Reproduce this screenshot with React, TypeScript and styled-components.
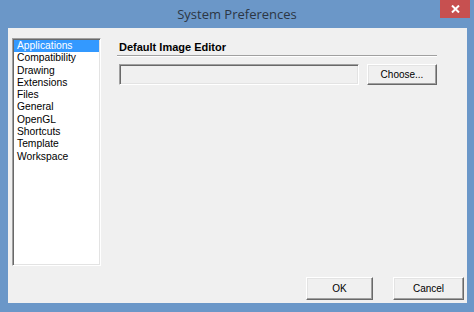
import styled, { createGlobalStyle } from "styled-components";

const GlobalStyle = createGlobalStyle`
  html, body {
    margin: 0;
    padding: 0;
    background: #6b97c8;
  }
  * {
    box-sizing: border-box;
  }
`;

const Window = styled.div`
  width: 474px;
  height: 312px;
  background: #6b97c8;
  display: flex;
  flex-direction: column;
  padding: 0 7px 9px 8px;
  font-family: "Liberation Sans", Arial, sans-serif;
`;

const TitleBar = styled.div`
  height: 28px;
  display: grid;
  grid-template-columns: 1fr auto 1fr;
  align-items: start;
  margin: 0 -7px 0 -8px;
`;

const Title = styled.div`
  grid-column: 2;
  font-family: "Open Sans", "Noto Sans", sans-serif;
  font-size: 13px;
  line-height: 28px;
  color: #2c3644;
`;

const CloseButton = styled.button`
  grid-column: 3;
  justify-self: end;
  margin-right: 4px;
  width: 30px;
  height: 18px;
  border: none;
  padding: 0;
  background: #c75050;
  display: flex;
  align-items: center;
  justify-content: center;
`;

const Client = styled.div`
  flex: 1;
  background: #f0f0f0;
  display: flex;
  flex-direction: column;
  padding: 10px 3px 3px 4px;
  font-size: 10px;
  color: #000;
`;

const Body = styled.div`
  display: flex;
  gap: 16px;
`;

const ListBox = styled.ul`
  margin: 0;
  padding: 1px 0 0;
  list-style: none;
  width: 89px;
  height: 228px;
  background: #fff;
  border-style: solid;
  border-width: 1px;
  border-color: #a0a0a0 #ffffff #ffffff #a0a0a0;
  box-shadow: inset 1px 1px 0 #696969, inset -1px -1px 0 #e3e3e3;
`;

const Item = styled.li<{ $selected?: boolean }>`
  height: 12.3px;
  line-height: 12.3px;
  margin: 0 1px 0 1px;
  padding-left: 3px;
  white-space: nowrap;
  font-size: 10.3px;
  background: ${(p) => (p.$selected ? "#3399ff" : "transparent")};
  color: ${(p) => (p.$selected ? "#fff" : "#000")};
`;

const Panel = styled.div`
  width: 320px;
  display: flex;
  flex-direction: column;
`;

const Heading = styled.div`
  font-weight: bold;
  font-size: 11px;
  line-height: 14px;
  padding: 2px 0 0 2px;
  height: 18px;
  border-bottom: 1px solid #a0a0a0;
  box-shadow: 0 1px 0 #fff;
`;

const FieldRow = styled.div`
  display: flex;
  gap: 8px;
  margin: 8px 0 0 2px;
`;

const Field = styled.div`
  width: 240px;
  height: 21px;
  background: #f0f0f0;
  border-style: solid;
  border-width: 1px;
  border-color: #a0a0a0 #ffffff #ffffff #a0a0a0;
  box-shadow: inset 1px 1px 0 #696969, inset -1px -1px 0 #e3e3e3;
`;

const Button = styled.button<{ $w: number; $h: number }>`
  width: ${(p) => p.$w}px;
  height: ${(p) => p.$h}px;
  padding: 0;
  background: #f0f0f0;
  font-family: "Liberation Sans", Arial, sans-serif;
  font-size: 10px;
  color: #000;
  border-style: solid;
  border-width: 1px;
  border-color: #ffffff #696969 #696969 #ffffff;
  box-shadow: inset -1px -1px 0 #a0a0a0, inset 1px 1px 0 #e3e3e3;
`;

const Footer = styled.div`
  margin-top: auto;
  display: flex;
  justify-content: flex-end;
  gap: 20px;
`;

const items = [
  "Applications",
  "Compatibility",
  "Drawing",
  "Extensions",
  "Files",
  "General",
  "OpenGL",
  "Shortcuts",
  "Template",
  "Workspace",
];

export default function App() {
  return (
    <Window>
      <GlobalStyle />
      <TitleBar>
        <Title>System Preferences</Title>
        <CloseButton aria-label="Close">
          <svg width="9" height="8" viewBox="0 0 9 8">
            <path d="M1 0.5 L8 7.5 M8 0.5 L1 7.5" stroke="#fff" strokeWidth="2" />
          </svg>
        </CloseButton>
      </TitleBar>
      <Client>
        <Body>
          <ListBox>
            {items.map((name, i) => (
              <Item key={name} $selected={i === 0}>
                {name}
              </Item>
            ))}
          </ListBox>
          <Panel>
            <Heading>Default Image Editor</Heading>
            <FieldRow>
              <Field />
              <Button $w={70} $h={21}>Choose...</Button>
            </FieldRow>
          </Panel>
        </Body>
        <Footer>
          <Button $w={67} $h={23}>OK</Button>
          <Button $w={71} $h={23}>Cancel</Button>
        </Footer>
      </Client>
    </Window>
  );
}
